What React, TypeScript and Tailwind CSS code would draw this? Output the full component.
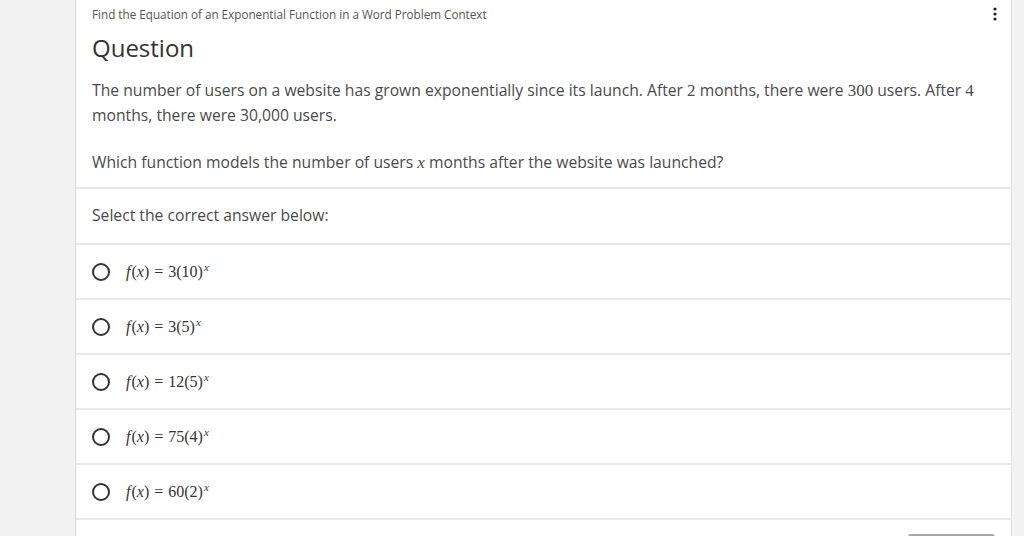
import React from "react";

const serif = "font-['Liberation_Serif','Times_New_Roman',serif]";

function Sep() {
  return <div className="h-[2px] shrink-0 bg-[#e8e8e8]" />;
}

function Formula({ a, b }: { a: string; b: string }) {
  return (
    <span className={`${serif} text-[16px] text-[#333]`}>
      <i className="mr-[1px]">f</i>(<i>x</i>)<span className="mx-[5px]">=</span>
      {a}({b})
      <i className="relative -top-[6px] ml-[1px] text-[11px]">x</i>
    </span>
  );
}

const options = [
  { a: "3", b: "10" },
  { a: "3", b: "5" },
  { a: "12", b: "5" },
  { a: "75", b: "4" },
  { a: "60", b: "2" },
];

export default function App() {
  return (
    <div className="flex h-[536px] w-[1024px] overflow-hidden bg-[#f2f2f2] font-['Open_Sans',sans-serif]">
      <div className="w-[76px] shrink-0 border-r border-[#d6d6d6]" />
      <div className="flex w-[935px] shrink-0 flex-col bg-white">
        <div className="shrink-0 px-4 pt-[6px] pb-[12px]">
          <div className="flex items-center justify-between">
            <span className="text-[11.7px] leading-4 text-[#555]">
              Find the Equation of an Exponential Function in a Word Problem Context
            </span>
            <svg width="4" height="14" viewBox="0 0 4 14" className="-mr-[2px]">
              <circle cx="2" cy="2" r="1.6" fill="#222" />
              <circle cx="2" cy="7" r="1.6" fill="#222" />
              <circle cx="2" cy="12" r="1.6" fill="#222" />
            </svg>
          </div>
          <h2 className="mt-[10px] text-[24px] leading-8 text-[#333]">Question</h2>
          <p className="mt-[14px] text-[15.7px] leading-6 text-[#4a4a4a]">
            The number of users on a website has grown exponentially since its launch. After{" "}
            <span className={`${serif} text-[17px]`}>2</span> months, there were{" "}
            <span className={`${serif} text-[17px]`}>300</span> users. After{" "}
            <span className={`${serif} text-[17px]`}>4</span> months, there were 30,000 users.
          </p>
          <p className="mt-[23px] text-[15.7px] leading-6 text-[#4a4a4a]">
            Which function models the number of users{" "}
            <i className={`${serif} text-[17px]`}>x</i> months after the website was launched?
          </p>
        </div>
        <Sep />
        <div className="flex h-[54px] shrink-0 items-center px-4 text-[15.7px] text-[#4a4a4a]">
          Select the correct answer below:
        </div>
        {options.map((o, i) => (
          <div key={i} className="shrink-0">
            <Sep />
            <div className="flex h-[53px] items-center gap-[16px] px-4">
              <span className="h-[18px] w-[18px] rounded-full border-2 border-[#333]" />
              <Formula a={o.a} b={o.b} />
            </div>
          </div>
        ))}
        <Sep />
        <div className="mt-[14px] flex shrink-0 justify-end pr-4">
          <div className="h-[20px] w-[87px] rounded-t-[3px] bg-[#a8a8a8]" />
        </div>
      </div>
      <div className="flex-1 border-l border-[#e4e4e4]" />
    </div>
  );
}
